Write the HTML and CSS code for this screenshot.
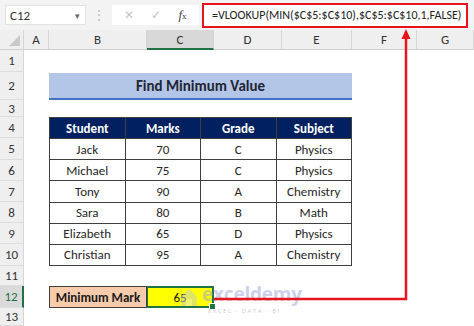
FILE: index.html
```html
<!DOCTYPE html>
<html lang="en">
<head>
    <meta charset="UTF-8">
    <meta name="viewport" content="width=device-width, initial-scale=1.0">
    <title>Find Minimum Value</title>
    <link rel="stylesheet" href="styles.css">
</head>
<body>
    <div class="window">
        <div class="formula-bar">
            <div class="name-box">C12 <span class="caret">&#9662;</span></div>
            <div class="dots">&#8942;</div>
            <div class="fx-box">
                <span class="fx-icon cancel">&#10005;</span>
                <span class="fx-icon ok">&#10003;</span>
                <span class="fx-label"><i>f</i><small>x</small></span>
            </div>
            <div class="formula">=VLOOKUP(MIN($C$5:$C$10),$C$5:$C$10,1,FALSE)</div>
        </div>

        <div class="sheet">
            <div class="col-head corner"><span class="tri"></span></div>
            <div class="col-head">A</div>
            <div class="col-head">B</div>
            <div class="col-head active">C</div>
            <div class="col-head">D</div>
            <div class="col-head">E</div>
            <div class="col-head">F</div>
            <div class="col-head">G</div>

            <div class="row-head" style="grid-row: 2">1</div>
            <div class="row-head" style="grid-row: 3">2</div>
            <div class="row-head" style="grid-row: 4">3</div>
            <div class="row-head" style="grid-row: 5">4</div>
            <div class="row-head" style="grid-row: 6">5</div>
            <div class="row-head" style="grid-row: 7">6</div>
            <div class="row-head" style="grid-row: 8">7</div>
            <div class="row-head" style="grid-row: 9">8</div>
            <div class="row-head" style="grid-row: 10">9</div>
            <div class="row-head" style="grid-row: 11">10</div>
            <div class="row-head" style="grid-row: 12">11</div>
            <div class="row-head active" style="grid-row: 13">12</div>
            <div class="row-head" style="grid-row: 14">13</div>

            <div class="title">Find Minimum Value</div>

            <table class="data">
                <tr><th>Student</th><th>Marks</th><th>Grade</th><th>Subject</th></tr>
                <tr><td>Jack</td><td>70</td><td>C</td><td>Physics</td></tr>
                <tr><td>Michael</td><td>75</td><td>C</td><td>Physics</td></tr>
                <tr><td>Tony</td><td>90</td><td>A</td><td>Chemistry</td></tr>
                <tr><td>Sara</td><td>80</td><td>B</td><td>Math</td></tr>
                <tr><td>Elizabeth</td><td>65</td><td>D</td><td>Physics</td></tr>
                <tr><td>Christian</td><td>95</td><td>A</td><td>Chemistry</td></tr>
            </table>

            <div class="min-label">Minimum Mark</div>
            <div class="min-value">65<span class="handle"></span></div>
        </div>

        <div class="watermark">
            <svg class="wm-logo" width="18" height="19" viewBox="0 0 18 19">
                <path d="M1 9 L9 2 L17 9 L17 19 L1 19 Z" fill="#c5ccc9"/>
                <path d="M6 19 L6 12 L12 12 L12 19 Z" fill="#e4e8e6"/>
            </svg>
            <div class="wm-text">
                <span class="wm-name">exceldemy</span>
                <span class="wm-sub">EXCEL · DATA · BI</span>
            </div>
        </div>

        <svg class="arrow" width="474" height="326" viewBox="0 0 474 326">
            <polyline points="214,299 406,299 406,38" fill="none" stroke="#e8141b" stroke-width="2.5"/>
            <polygon points="406,29 401.5,39 410.5,39" fill="#e8141b"/>
        </svg>
    </div>
</body>
</html>
```

FILE: styles.css
```css
body {
    margin: 0;
    font-family: "Carlito", "Lato", sans-serif;
    background: #ffffff;
}
.window {
    position: relative;
    width: 474px;
    height: 326px;
    overflow: hidden;
}
.formula-bar {
    height: 30px;
    background: #f3f3f3;
    display: flex;
    align-items: center;
    padding-left: 5px;
    box-sizing: border-box;
}
.name-box {
    width: 81px;
    height: 20px;
    background: #fff;
    border: 1px solid #e2e2e2;
    box-sizing: border-box;
    font-size: 13px;
    color: #333;
    display: flex;
    align-items: center;
    justify-content: space-between;
    padding: 0 5px 0 4px;
}
.caret {
    font-size: 9px;
    color: #666;
}
.dots {
    width: 26px;
    text-align: center;
    color: #b8b8b8;
    font-size: 12px;
}
.fx-box {
    width: 87px;
    height: 20px;
    background: #fff;
    display: flex;
    align-items: center;
    justify-content: space-around;
    padding: 0 4px;
    box-sizing: border-box;
}
.fx-icon {
    color: #c4c4c4;
    font-size: 12px;
}
.fx-label {
    font-family: "Liberation Serif", serif;
    font-size: 13px;
    color: #444;
}
.fx-label small {
    font-size: 9px;
}
.formula {
    margin-left: 3px;
    width: 266px;
    height: 25px;
    border: 2px solid #e8141b;
    background: #fff;
    box-sizing: border-box;
    font-size: 12px;
    color: #222;
    display: flex;
    align-items: center;
    padding-left: 8px;
    white-space: nowrap;
    overflow: hidden;
}
.sheet {
    display: grid;
    grid-template-columns: 24px 25px 98px 67px 68px 70px 65px 57px;
    grid-template-rows: 20px 22px 28px 17px 21px 22px 21px 21px 21px 21px 22px 20px 22px 18px;
}
.col-head {
    grid-row: 1;
    background: #efefef;
    border-right: 1px solid #d6d6d6;
    border-bottom: 1px solid #cfcfcf;
    font-size: 13px;
    color: #333;
    display: flex;
    align-items: center;
    justify-content: center;
    box-sizing: border-box;
}
.col-head.active {
    background: #d8d8d8;
    border-bottom: 2px solid #217346;
}
.corner {
    justify-content: flex-end;
    align-items: flex-end;
    padding: 0 3px 3px 0;
}
.tri {
    width: 0;
    height: 0;
    border-left: 11px solid transparent;
    border-bottom: 11px solid #c9c9c9;
}
.row-head {
    grid-column: 1;
    background: #efefef;
    border-right: 1px solid #d6d6d6;
    border-bottom: 1px solid #dcdcdc;
    font-size: 13px;
    color: #333;
    display: flex;
    align-items: center;
    justify-content: center;
    box-sizing: border-box;
}
.row-head.active {
    background: #dadada;
    color: #217346;
    border-right: 2px solid #217346;
}
.title {
    grid-column: 3 / 7;
    grid-row: 3;
    background: #b4c6e7;
    border-bottom: 2px solid #4472c4;
    font-weight: bold;
    font-size: 15px;
    color: #1f2533;
    display: flex;
    align-items: center;
    justify-content: center;
    box-sizing: border-box;
    margin-top: 1px;
}
.data {
    grid-column: 3 / 7;
    grid-row: 5 / 12;
    border-collapse: collapse;
    width: 100%;
    height: 100%;
    table-layout: fixed;
    font-size: 13px;
}
.data th,
.data td {
    border: 1px solid #3f3f3f;
    text-align: center;
    padding: 0;
    color: #262626;
}
.data th {
    background: #002060;
    color: #fff;
    font-weight: bold;
}
.min-label {
    grid-column: 3;
    grid-row: 13;
    background: #f8cbad;
    border: 1px solid #3f3f3f;
    font-weight: bold;
    font-size: 13px;
    color: #1a1a1a;
    display: flex;
    align-items: center;
    justify-content: center;
    box-sizing: border-box;
}
.min-value {
    grid-column: 4;
    grid-row: 13;
    position: relative;
    background: #ffff00;
    border: 2px solid #217346;
    border-left-width: 1px;
    font-size: 13px;
    color: #222;
    display: flex;
    align-items: center;
    justify-content: center;
    box-sizing: border-box;
}
.handle {
    position: absolute;
    right: -4px;
    bottom: -4px;
    width: 5px;
    height: 5px;
    background: #217346;
    border: 1px solid #fff;
}
.watermark {
    position: absolute;
    left: 180px;
    top: 284px;
    display: flex;
    align-items: flex-start;
    gap: 4px;
    opacity: 0.5;
}
.wm-logo {
    margin-top: 3px;
}
.wm-text {
    display: flex;
    flex-direction: column;
    line-height: 1;
}
.wm-name {
    font-family: "Open Sans", sans-serif;
    font-weight: bold;
    font-size: 19px;
    line-height: 20px;
    color: #9aa3d8;
    letter-spacing: -0.2px;
}
.wm-sub {
    font-family: "Open Sans", sans-serif;
    font-size: 6px;
    line-height: 7px;
    color: #9a9a9a;
    letter-spacing: 1.5px;
    margin-top: 4px;
    padding-left: 6px;
}
.arrow {
    position: absolute;
    left: 0;
    top: 0;
    pointer-events: none;
}
```
